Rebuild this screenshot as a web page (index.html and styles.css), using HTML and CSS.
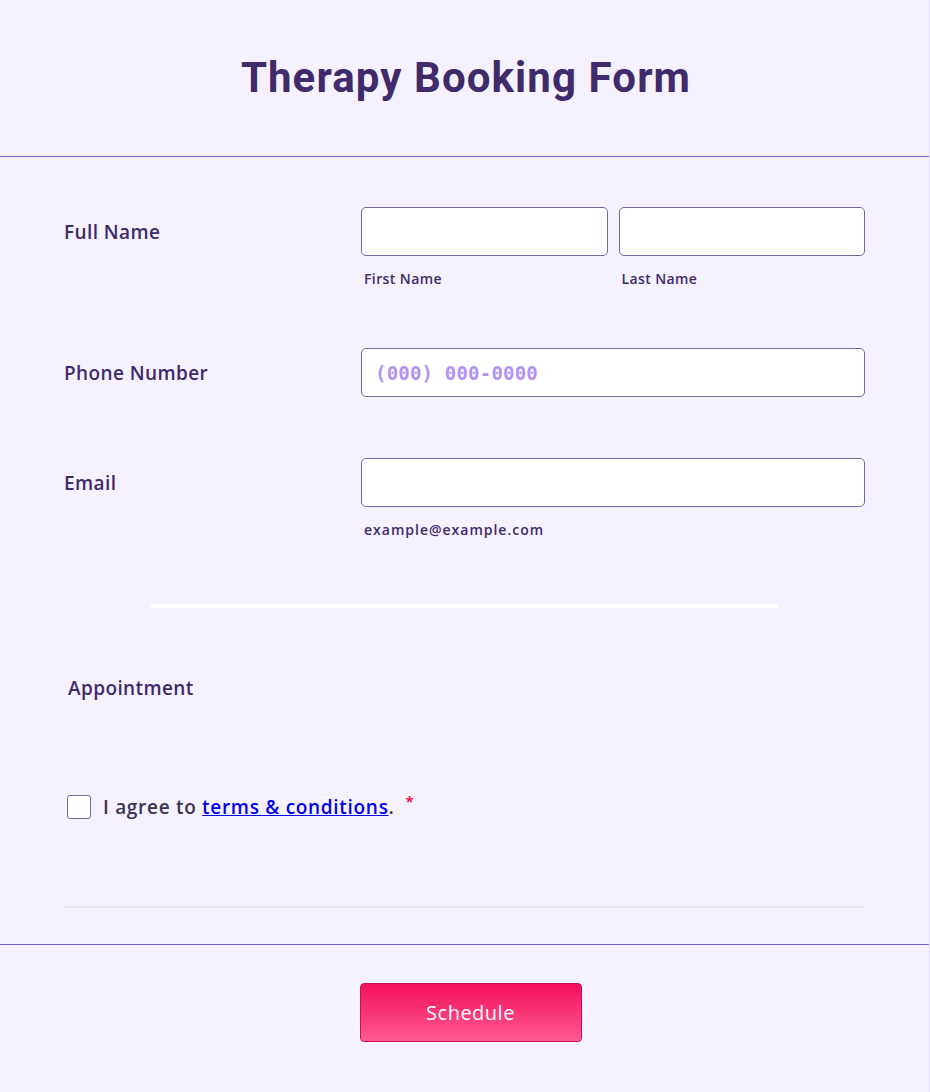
FILE: index.html
```html
<!DOCTYPE html>
<html lang="en">
<head>
<meta charset="utf-8">
<title>Therapy Booking Form</title>
<link rel="stylesheet" href="styles.css">
</head>
<body>
<div class="form">
  <header class="head">
    <h1 class="title">Therapy Booking Form</h1>
  </header>
  <main class="content">
    <div class="row row-name">
      <label class="label">Full Name</label>
      <div class="field two">
        <div class="sub">
          <input class="input" type="text">
          <span class="hint">First Name</span>
        </div>
        <div class="sub">
          <input class="input" type="text">
          <span class="hint">Last Name</span>
        </div>
      </div>
    </div>
    <div class="row row-phone">
      <label class="label">Phone Number</label>
      <div class="field">
        <input class="input mono" type="text" placeholder="(000) 000-0000">
      </div>
    </div>
    <div class="row row-email">
      <label class="label">Email</label>
      <div class="field">
        <input class="input" type="text">
        <span class="hint hint-email">example@example.com</span>
      </div>
    </div>
    <div class="divider"></div>
    <div class="appt">Appointment</div>
    <div class="agree">
      <span class="box"></span>
      <span class="agree-text">I agree to <a href="#" class="link">terms &amp; conditions</a>.</span>
      <span class="req">*</span>
    </div>
    <div class="rule"></div>
  </main>
  <footer class="foot">
    <button class="btn" type="button">Schedule</button>
  </footer>
</div>
</body>
</html>
```
FILE: styles.css
```css
* { box-sizing: border-box; }
html, body { margin: 0; padding: 0; }
body {
  background: #f5f1fe;
  font-family: "Open Sans", "Noto Sans", sans-serif;
  color: #3e2a6a;
}
.form {
  width: 930px;
  min-height: 1092px;
  border-right: 1px solid #e2d9f5;
}
.head {
  height: 157px;
  border-bottom: 1px solid #7a5bc6;
  display: flex;
  justify-content: center;
  padding-top: 52px;
}
.title {
  margin: 0 0 0 3px;
  font-family: Roboto, "Noto Sans", sans-serif;
  font-weight: 700;
  font-size: 42px;
  line-height: 52px;
  color: #3f2a6b;
  letter-spacing: 1.1px;
}
.content {
  padding: 0 65px 0 64px;
  height: 787px;
  display: flex;
  flex-direction: column;
}
.row {
  display: grid;
  grid-template-columns: 297px 504px;
}
.row-name { margin-top: 50px; }
.row-phone { margin-top: 60px; }
.row-email { margin-top: 60px; }
.label {
  font-size: 19px;
  font-weight: 600;
  line-height: 50px;
  color: #3e2a6a;
  letter-spacing: 0.4px;
}
.field { display: flex; flex-direction: column; }
.field.two { flex-direction: row; gap: 11px; }
.sub { flex: 1; display: flex; flex-direction: column; }
.input {
  height: 49px;
  width: 100%;
  background: #fff;
  border: 1px solid #76679c;
  border-radius: 5px;
  padding: 0 13px;
  font-size: 19px;
  outline: none;
}
.mono {
  font-family: "DejaVu Sans Mono", monospace;
  font-size: 19px;
  font-weight: 700;
  letter-spacing: 0.2px;
}
.mono::placeholder { color: #b392f5; }
.hint {
  font-size: 14px;
  font-weight: 600;
  color: #3e2a6a;
  margin-top: 14px;
  padding-left: 3px;
  line-height: 18px;
  letter-spacing: 0.4px;
}
.hint-email { margin-top: 14px; letter-spacing: 1px; }
.divider {
  margin: 65px 0 0 87px;
  width: 627px;
  height: 4px;
  background: #fff;
}
.appt {
  margin: 68px 0 0 4px;
  font-size: 19px;
  font-weight: 600;
  line-height: 24px;
  color: #3e2a6a;
  letter-spacing: 0.4px;
}
.agree {
  margin: 94px 0 0 3px;
  display: flex;
  align-items: center;
  gap: 12px;
}
.box {
  width: 24px;
  height: 24px;
  border: 1px solid #76679c;
  border-radius: 3px;
  background: #fff;
}
.agree-text {
  font-size: 19px;
  font-weight: 600;
  color: #3b3452;
  letter-spacing: 0.7px;
}
.link { color: #0000ee; text-decoration: underline; }
.req {
  color: #f0145a;
  font-size: 15px;
  font-weight: 700;
  align-self: flex-start;
  margin-left: -1px;
  margin-top: -3px;
}
.rule {
  margin-top: 86px;
  height: 2px;
  background: #ebe7f0;
}
.foot {
  border-top: 1px solid #7a5bc6;
  display: flex;
  justify-content: center;
  padding-top: 38px;
  height: 148px;
}
.btn {
  width: 222px;
  height: 59px;
  border: 1px solid #c9124f;
  border-radius: 4px;
  background: linear-gradient(#f2105a, #ff5a92);
  color: #fff;
  font-family: "Open Sans", "Noto Sans", sans-serif;
  font-size: 20px;
  font-weight: 500;
  letter-spacing: 0.5px;
  margin-left: 12px;
}
```
